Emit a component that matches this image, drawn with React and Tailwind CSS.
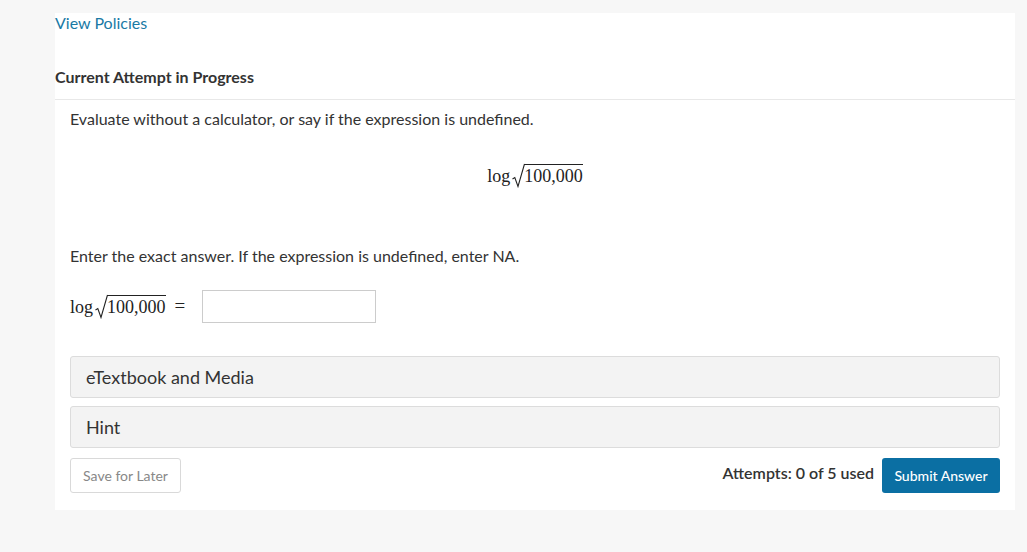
import React from "react";

const Radical = () => (
  <svg width="13" height="25" viewBox="0 0 13 25" className="shrink-0 -mr-px">
    <path d="M0.5 16 L2.8 14.6 L6 23.5 L12.5 1" fill="none" stroke="#222" strokeWidth="1.1" />
  </svg>
);

const LogRoot = () => (
  <span className="inline-flex items-end font-['Liberation_Serif',serif] text-[18px] text-[#222] leading-none">
    <span className="mr-[2px] pb-[3px]">log</span>
    <Radical />
    <span className="border-t border-[#222] pt-[2px] pb-[3px]">100,000</span>
  </span>
);

export default function App() {
  return (
    <div className="min-h-[552px] bg-[#f7f7f7] pt-[13px] font-['Lato','Open_Sans',sans-serif] text-[#333]">
      <div className="ml-[55px] w-[960px] bg-white pb-[17px]">
        <div className="leading-[20px]">
          <a href="#" className="text-[16px] leading-[20px] text-[#1a7aa5]">View Policies</a>
        </div>
        <h2 className="mt-[34px] text-[16px] font-bold leading-[20px] text-[#333] pb-[12px] border-b border-[#e8e8e8]">
          Current Attempt in Progress
        </h2>
        <div className="px-[15px]">
          <p className="mt-[9px] text-[16px] leading-[20px]">
            Evaluate without a calculator, or say if the expression is undefined.
          </p>
          <div className="mt-[34px] flex justify-center">
            <LogRoot />
          </div>
          <p className="mt-[58px] text-[16px] leading-[20px]">
            Enter the exact answer. If the expression is undefined, enter NA.
          </p>
          <div className="mt-[24px] flex items-center">
            <LogRoot />
            <span className="ml-[9px] font-['Liberation_Serif',serif] text-[19px] text-[#222]">=</span>
            <input
              type="text"
              className="ml-[17px] h-[33px] w-[174px] border border-[#ccc] bg-white"
            />
          </div>
          <div className="mt-[33px] flex h-[42px] items-center rounded-[3px] border border-[#dcdcdc] bg-[#f3f3f3] px-[15px] text-[18px]">
            eTextbook and Media
          </div>
          <div className="mt-[8px] flex h-[42px] items-center rounded-[3px] border border-[#dcdcdc] bg-[#f3f3f3] px-[15px] text-[18px]">
            Hint
          </div>
          <div className="mt-[10px] flex items-start justify-between">
            <button className="h-[35px] w-[111px] rounded-[3px] border border-[#d9d9d9] bg-white text-[14px] text-[#888]">
              Save for Later
            </button>
            <div className="flex items-start">
              <span className="mt-[3px] text-[16px] font-semibold text-[#333]">Attempts: 0 of 5 used</span>
              <button className="ml-[8px] h-[35px] w-[118px] rounded-[3px] bg-[#0b6fa3] text-[14px] font-medium text-white">
                Submit Answer
              </button>
            </div>
          </div>
        </div>
      </div>
    </div>
  );
}
